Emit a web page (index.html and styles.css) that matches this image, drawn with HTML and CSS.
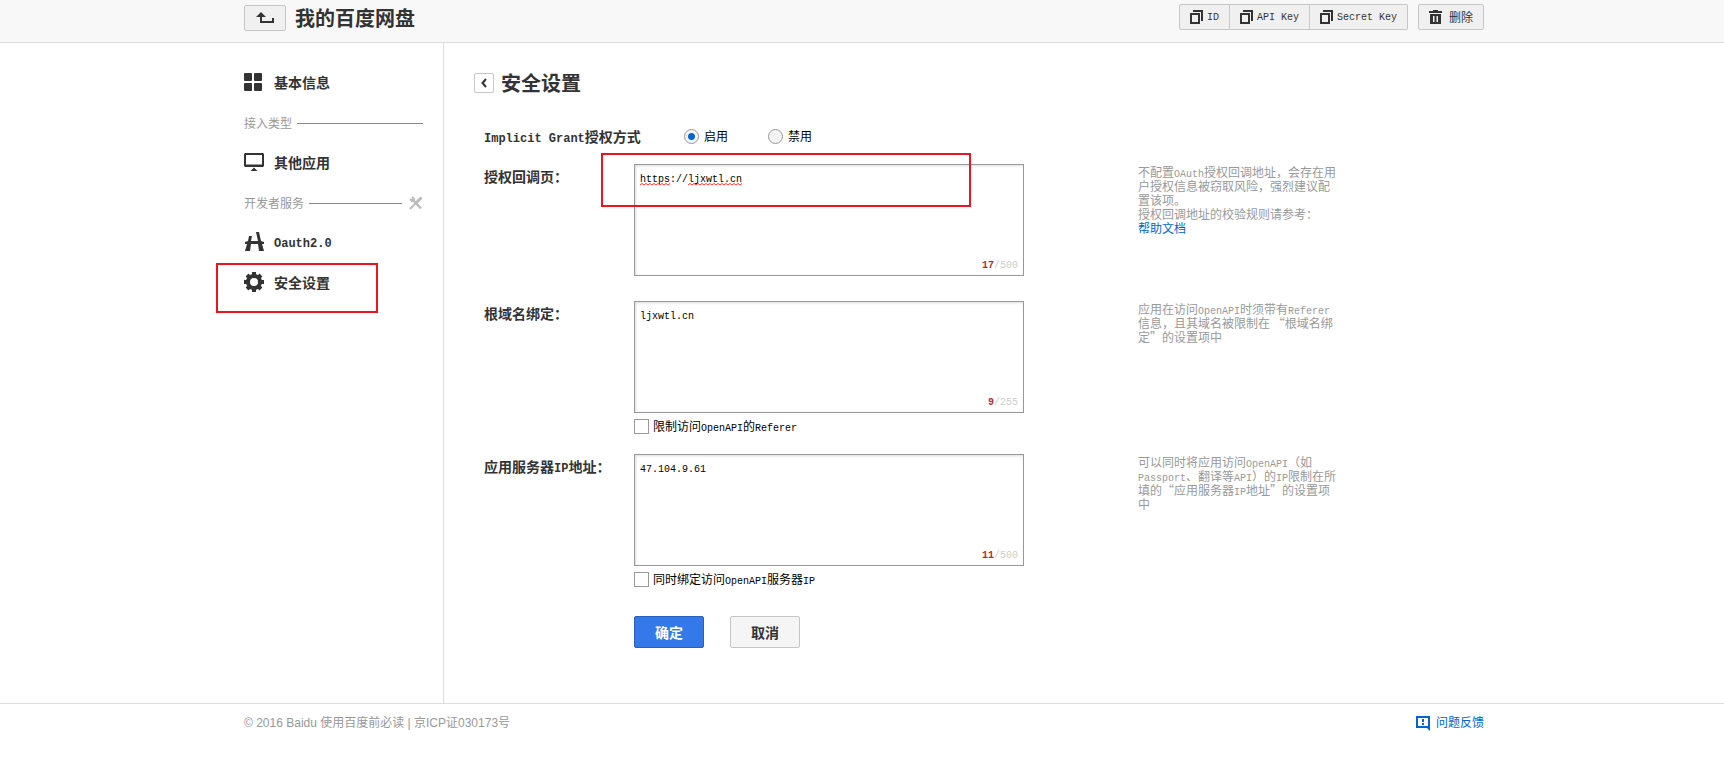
FILE: index.html
```html
<!DOCTYPE html>
<html lang="zh-CN">
<head>
<meta charset="utf-8">
<title>我的百度网盘 - 安全设置</title>
<link rel="stylesheet" href="styles.css">
</head>
<body>
<header class="topbar">
  <div class="container topbar-inner">
    <button type="button" class="btn back-up" aria-label="返回上级">
      <svg width="20" height="12" viewBox="0 0 20 12"><path d="M6 0L11 5H7V9H17V6H19V11H5V5H1Z" fill="#333"/></svg>
    </button>
    <h1 class="app-title">我的百度网盘</h1>
    <div class="btn-group">
      <button type="button" class="btn"><svg width="13" height="14" viewBox="0 0 13 14"><path d="M3 1H12V11M1 4H9V13H1Z" fill="none" stroke="#333" stroke-width="2"/></svg><span class="mono">ID</span></button>
      <button type="button" class="btn"><svg width="13" height="14" viewBox="0 0 13 14"><path d="M3 1H12V11M1 4H9V13H1Z" fill="none" stroke="#333" stroke-width="2"/></svg><span class="mono">API Key</span></button>
      <button type="button" class="btn"><svg width="13" height="14" viewBox="0 0 13 14"><path d="M3 1H12V11M1 4H9V13H1Z" fill="none" stroke="#333" stroke-width="2"/></svg><span class="mono">Secret Key</span></button>
    </div>
    <button type="button" class="btn btn-delete"><svg width="13" height="14" viewBox="0 0 13 14"><path d="M4 0H9V1H13V3H0V1H4ZM1 4H12V14H1ZM4 6V12H5.500V6ZM7.500 6V12H9V6Z" fill="#333" fill-rule="evenodd"/></svg>删除</button>
  </div>
</header>

<div class="container page">
  <nav class="sidebar">
    <a class="nav-item" href="#"><span class="nav-icon"><svg width="18" height="18" viewBox="0 0 18 18" fill="#333"><rect width="8" height="8" rx="1"/><rect x="10" width="8" height="8" rx="1"/><rect y="10" width="8" height="8" rx="1"/><rect x="10" y="10" width="8" height="8" rx="1"/></svg></span>基本信息</a>
    <div class="nav-group">接入类型<span class="nav-line"></span></div>
    <a class="nav-item" href="#"><span class="nav-icon"><svg width="20" height="18" viewBox="0 0 20 18" fill="#333"><path d="M1 0H19L20 1V13L19 14H1L0 13V1ZM2 2V11.500H18V2ZM10 14.500L13.500 18H6.500Z" fill-rule="evenodd"/></svg></span>其他应用</a>
    <div class="nav-group">开发者服务<span class="nav-line"></span>
      <svg class="tools" width="14" height="14" viewBox="0 0 14 14" fill="none" stroke="#bbb"><path d="M12.500 1.500L7.500 6.500" stroke-width="3"/><path d="M7.500 6.500L1 13" stroke-width="2"/><path d="M4 4L12 12.500" stroke-width="2.500"/><path d="M1 3L3 5L5 3L3 1" stroke-width="2"/></svg>
    </div>
    <a class="nav-item" href="#"><span class="nav-icon"><svg width="21" height="20" viewBox="0 0 21 20" fill="#333"><path d="M5 4H8L7 9H14L12 0H15L17 9L20 10V12H18L20 19H15L14 12H7L6 19H1L3 12H1V10L4 9Z"/></svg></span><span class="mono">Oauth2.0</span></a>
    <a class="nav-item current" href="#"><span class="nav-icon"><svg width="20" height="20" viewBox="0 0 20 20" fill="none" stroke="#333"><circle cx="10" cy="10" r="6" stroke-width="4"/><path d="M10 0V4M10 16V20M0 10H4M16 10H20M3 3L6 6M14 14L17 17M17 3L14 6M6 14L3 17" stroke-width="4"/></svg></span>安全设置<span class="mark mark-nav"></span></a>
  </nav>

  <main class="main">
    <div class="title-row">
      <button type="button" class="back-small" aria-label="返回"><svg width="6" height="10" viewBox="0 0 6 10"><path d="M5 1L1.500 5L5 9" fill="none" stroke="#333" stroke-width="2"/></svg></button>
      <h2 class="page-title">安全设置</h2>
    </div>
    <form class="form">
      <fieldset class="grant">
        <legend class="grant-label"><span class="mono">Implicit Grant</span>授权方式</legend>
        <label class="choice"><input type="radio" name="grant" checked>启用</label>
        <label class="choice"><input type="radio" name="grant">禁用</label>
      </fieldset>

      <div class="row">
        <label class="row-label" for="callback">授权回调页：</label>
        <div class="field">
          <div class="box">
            <textarea id="callback" spellcheck="false">https://ljxwtl.cn</textarea>
            <svg class="squiggle" width="102" height="3" viewBox="0 0 102 3" fill="none" stroke="#f33"><path d="M0 2L2 0.500L4 2L6 0.500L8 2L10 0.500L12 2L14 0.500L16 2L18 0.500L20 2L22 0.500L24 2L26 0.500L28 2L30 0.500M48 2L50 0.500L52 2L54 0.500L56 2L58 0.500L60 2L62 0.500L64 2L66 0.500L68 2L70 0.500L72 2L74 0.500L76 2L78 0.500L80 2L82 0.500L84 2L86 0.500L88 2L90 0.500L92 2L94 0.500L96 2L98 0.500L100 2L102 0.500"/></svg>
            <span class="counter"><b>17</b>/500</span>
            <span class="mark mark-field"></span>
          </div>
        </div>
        <p class="hint">不配置<span class="mono">OAuth</span>授权回调地址，会存在用户授权信息被窃取风险，强烈建议配置该项。<br>授权回调地址的校验规则请参考：<br><a href="#">帮助文档</a></p>
      </div>

      <div class="row">
        <label class="row-label" for="domain">根域名绑定：</label>
        <div class="field">
          <div class="box">
            <textarea id="domain" spellcheck="false">ljxwtl.cn</textarea>
            <span class="counter"><b>9</b>/255</span>
          </div>
          <label class="check"><input type="checkbox"><span>限制访问<span class="mono">OpenAPI</span>的<span class="mono">Referer</span></span></label>
        </div>
        <p class="hint">应用在访问<span class="mono">OpenAPI</span>时须带有<span class="mono">Referer</span>信息，且其域名被限制在 “根域名绑定”的设置项中</p>
      </div>

      <div class="row">
        <label class="row-label" for="server">应用服务器<span class="mono">IP</span>地址：</label>
        <div class="field">
          <div class="box">
            <textarea id="server" spellcheck="false">47.104.9.61</textarea>
            <span class="counter"><b>11</b>/500</span>
          </div>
          <label class="check"><input type="checkbox"><span>同时绑定访问<span class="mono">OpenAPI</span>服务器<span class="mono">IP</span></span></label>
        </div>
        <p class="hint">可以同时将应用访问<span class="mono">OpenAPI</span>（如<span class="mono">Passport</span>、翻译等<span class="mono">API</span>）的<span class="mono">IP</span>限制在所填的“应用服务器<span class="mono">IP</span>地址”的设置项中</p>
      </div>

      <div class="actions">
        <button type="submit" class="action primary">确定</button>
        <button type="button" class="action">取消</button>
      </div>
    </form>
  </main>
</div>

<footer class="footer">
  <div class="container footer-inner">
    <span>© 2016 Baidu 使用百度前必读 | 京ICP证030173号</span>
    <a class="feedback" href="#"><svg width="14" height="15" viewBox="0 0 14 15"><path d="M0 0H14V15L11 12H0ZM2 2V10H12V2ZM6 3H8V6H6ZM6 7H8V9H6Z" fill="#06c" fill-rule="evenodd"/></svg>问题反馈</a>
  </div>
</footer>
</body>
</html>
```

FILE: styles.css
```css
* {
  box-sizing: border-box;
}

body {
  margin: 0;
  background: #fff;
  color: #333;
  font-family: "Noto Sans CJK SC", sans-serif;
  font-size: 12px;
  line-height: 20px;
}

button,
input,
textarea {
  margin: 0;
  font-family: inherit;
  color: inherit;
}

a {
  color: #06c;
  text-decoration: none;
}

svg {
  flex: none;
  display: block;
}

.mono {
  font-family: "Liberation Mono", monospace;
  font-size: 10px;
  line-height: 1;
}

.container {
  max-width: 1244px;
  margin: 0 auto;
  padding-left: 4px;
}

/* Top bar */
.topbar {
  background: #f8f8f8;
  border-bottom: 1px solid #ddd;
}

.topbar-inner {
  display: flex;
  align-items: flex-start;
  height: 42px;
  padding-top: 4px;
}

.btn {
  display: flex;
  align-items: center;
  gap: 4px;
  height: 26px;
  padding: 0 10px;
  border: 1px solid #c6c6c6;
  border-radius: 2px;
  background: #f0f0f0;
  font-size: 12px;
  line-height: 24px;
}

.btn .mono {
  padding-top: 2px;
}

.back-up {
  width: 42px;
  margin-top: 1px;
}

.app-title {
  margin: 0 auto 0 9px;
  font-size: 20px;
  line-height: 28px;
}

.btn-group {
  display: flex;
  margin-right: 10px;
}

.btn-group .btn {
  border-radius: 0;
}

.btn-group .btn + .btn {
  border-left: 0;
}

.btn-group .btn:first-child {
  border-radius: 2px 0 0 2px;
}

.btn-group .btn:last-child {
  border-radius: 0 2px 2px 0;
}

.btn-delete {
  gap: 7px;
}

/* Sidebar */
.page {
  display: flex;
}

.sidebar {
  flex: none;
  width: 200px;
  padding-top: 20px;
  border-right: 1px solid #ddd;
}

.nav-item {
  position: relative;
  display: flex;
  align-items: center;
  height: 40px;
  padding-bottom: 2px;
  color: #333;
  font-size: 14px;
  font-weight: bold;
}

.nav-item .mono,
.grant-label .mono,
.row-label .mono {
  font-size: 12px;
}

.nav-item .mono {
  padding-top: 4px;
}

.nav-icon {
  width: 30px;
}

.nav-group {
  display: flex;
  align-items: center;
  height: 40px;
  padding-right: 20px;
  color: #999;
}

.nav-line {
  flex: 1;
  margin-left: 5px;
  border-top: 1px solid #888;
}

.tools {
  margin-left: 7px;
}

.mark {
  position: absolute;
  border: 2px solid #ed141e;
  pointer-events: none;
}

.mark-nav {
  top: 0;
  left: -28px;
  width: 162px;
  height: 50px;
}

.mark-field {
  top: -11px;
  left: -33px;
  width: 370px;
  height: 54px;
}

/* Main */
.main {
  flex: 1;
  padding: 30px 0 55px 30px;
}

.title-row {
  display: flex;
  align-items: center;
  gap: 7px;
}

.back-small {
  display: flex;
  align-items: center;
  justify-content: center;
  width: 20px;
  height: 20px;
  padding: 0;
  border: 1px solid #c6c6c6;
  border-radius: 2px;
  background: #fff;
}

.page-title {
  margin: 0;
  font-size: 20px;
  line-height: 20px;
}

.form {
  padding: 33px 0 0 10px;
}

.grant {
  display: flex;
  align-items: center;
  height: 20px;
  margin: 0 0 18px;
  padding: 0;
  border: 0;
  color: #000;
}

.grant-label {
  float: left;
  width: 200px;
  padding: 0;
  color: #333;
  font-size: 14px;
  font-weight: bold;
}

.choice {
  display: flex;
  align-items: center;
  gap: 5px;
  width: 84px;
}

.choice input {
  appearance: none;
  width: 15px;
  height: 15px;
  border: 1px solid #999;
  border-radius: 50%;
  background: #f3f3f3;
}

.choice input:checked {
  background: radial-gradient(circle, #06c 3px, #f3f3f3 4px);
}

.row {
  display: grid;
  grid-template-columns: 150px 390px 200px;
  align-items: start;
  margin-bottom: 20px;
}

.row-label {
  font-size: 14px;
  font-weight: bold;
  line-height: 24px;
}

.box {
  position: relative;
  margin-bottom: 5px;
}

.box textarea {
  display: block;
  width: 100%;
  height: 112px;
  padding: 5px;
  border: 1px solid #999;
  border-radius: 0;
  box-shadow: inset 1px 1px 3px #ddd;
  background: #fff;
  color: #000;
  font-family: "Liberation Mono", monospace;
  font-size: 10px;
  line-height: 20px;
  resize: none;
}

.squiggle {
  position: absolute;
  top: 19px;
  left: 6px;
}

.counter {
  position: absolute;
  right: 6px;
  bottom: 0;
  color: #ccc;
  font-family: "Liberation Mono", monospace;
  font-size: 10px;
}

.counter b {
  color: #a33;
}

.check {
  display: flex;
  align-items: center;
  gap: 4px;
  height: 16px;
  color: #000;
}

.check input {
  appearance: none;
  width: 15px;
  height: 15px;
  border: 1px solid #999;
  background: #fff;
}

.hint {
  width: 200px;
  margin: 1px 0 0 114px;
  color: #999;
  line-height: 14px;
}

.hint .mono {
  line-height: 0;
}

.actions {
  display: flex;
  gap: 26px;
  padding: 9px 0 0 150px;
}

.action {
  width: 70px;
  height: 32px;
  padding: 0;
  border: 1px solid #c6c6c6;
  border-radius: 2px;
  background: #f5f5f5;
  font-size: 14px;
  font-weight: bold;
}

.primary {
  border-color: #2c5fb8;
  background: #3479e9;
  color: #fff;
}

/* Footer */
.footer {
  border-top: 1px solid #ddd;
  color: #999;
  font-family: "Liberation Sans", "Noto Sans CJK SC", sans-serif;
}

.footer-inner {
  display: flex;
  justify-content: space-between;
  padding-top: 9px;
}

.feedback {
  display: flex;
  align-items: center;
  gap: 6px;
}
```
